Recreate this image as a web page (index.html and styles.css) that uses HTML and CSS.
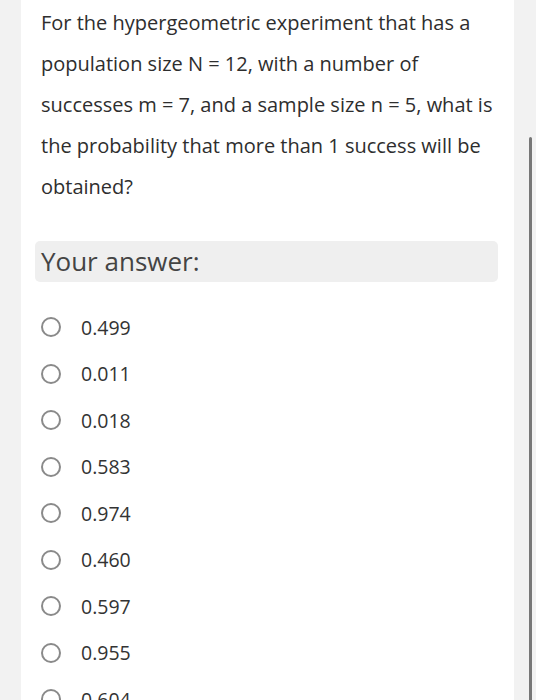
FILE: index.html
```html
<!DOCTYPE html>
<html>
<head>
<meta charset="utf-8">
<link rel="stylesheet" href="styles.css">
</head>
<body>
<div class="card">
  <p class="question">For the hypergeometric experiment that has a population size N = 12, with a number of successes m = 7, and a sample size n = 5, what is the probability that more than 1 success will be obtained?</p>
  <div class="answer-label">Your answer:</div>
  <ul class="options">
    <li class="option"><span class="radio"></span><span class="val">0.499</span></li>
    <li class="option"><span class="radio"></span><span class="val">0.011</span></li>
    <li class="option"><span class="radio"></span><span class="val">0.018</span></li>
    <li class="option"><span class="radio"></span><span class="val">0.583</span></li>
    <li class="option"><span class="radio"></span><span class="val">0.974</span></li>
    <li class="option"><span class="radio"></span><span class="val">0.460</span></li>
    <li class="option"><span class="radio"></span><span class="val">0.597</span></li>
    <li class="option"><span class="radio"></span><span class="val">0.955</span></li>
    <li class="option"><span class="radio"></span><span class="val">0.604</span></li>
  </ul>
</div>
<div class="scrollbar"></div>
</body>
</html>
```
FILE: styles.css
```css
html, body {
  margin: 0;
  padding: 0;
  height: 100%;
}
body {
  background: #f2f2f2;
  overflow: hidden;
  font-family: "Open Sans", "Noto Sans", sans-serif;
  color: #333;
}
.card {
  margin-left: 21px;
  width: 493px;
  min-height: 760px;
  background: #fff;
  padding-top: 2px;
  box-sizing: border-box;
}
.question {
  margin: 0 0 0 20px;
  width: 462px;
  font-size: 20px;
  line-height: 41px;
  color: #2e2e2e;
}
.answer-label {
  margin: 34px 0 0 14px;
  width: 463px;
  height: 41px;
  background: #efefef;
  border-radius: 5px;
  box-sizing: border-box;
  padding-left: 6px;
  font-size: 26px;
  line-height: 41px;
  color: #444;
}
.options {
  list-style: none;
  margin: 22px 0 0 0;
  padding: 0 0 0 20px;
}
.option {
  display: flex;
  align-items: center;
  height: 46.5px;
  gap: 20px;
}
.radio {
  width: 20px;
  height: 20px;
  box-sizing: border-box;
  border: 2px solid #8a8a8a;
  border-radius: 50%;
  flex: none;
}
.val {
  font-size: 19.5px;
  color: #333;
}
.scrollbar {
  position: fixed;
  right: 4px;
  top: 137px;
  bottom: 0;
  width: 3.5px;
  background: #777;
  border-radius: 2px 2px 0 0;
}
```
